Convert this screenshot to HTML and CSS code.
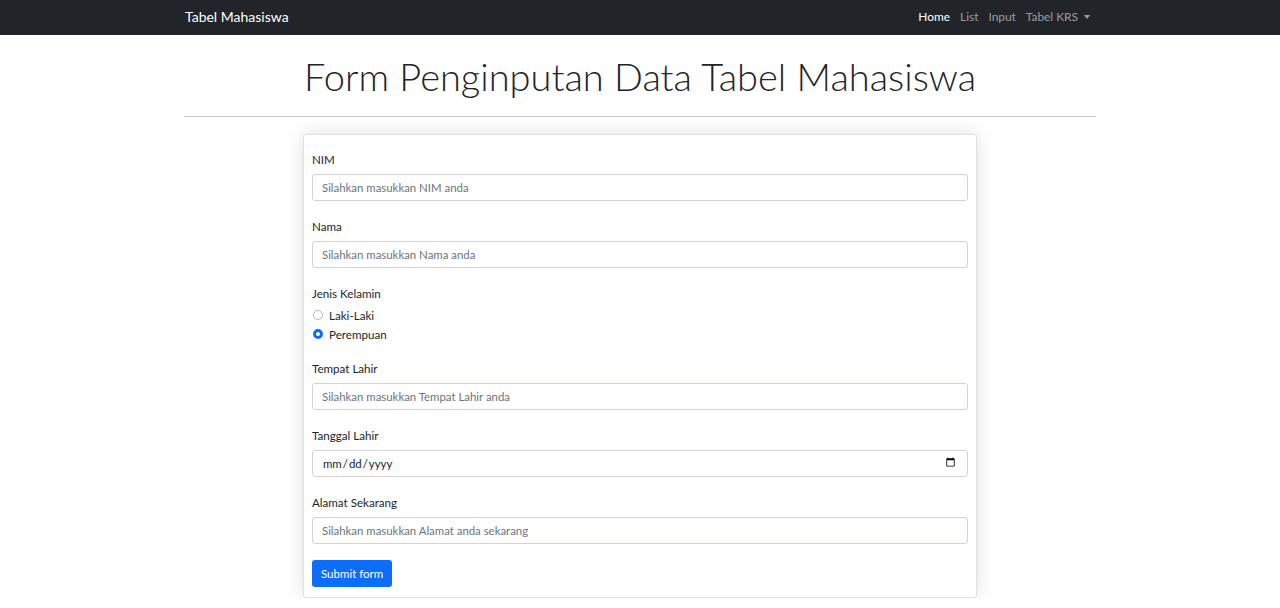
FILE: index.html
```html
<!DOCTYPE html>
<html>
  <head>
    <title>Tabel Mahasiswa</title>
    <link rel="stylesheet" href="styles.css">
  </head>
  <body>
    <nav class="navbar">
      <div class="navContainer">
        <a class="brand" href="#">Tabel Mahasiswa</a>
        <ul class="navLinks">
          <li><a class="active" href="#">Home</a></li>
          <li><a href="#">List</a></li>
          <li><a href="#">Input</a></li>
          <li><a class="dropdown" href="#">Tabel KRS</a></li>
        </ul>
      </div>
    </nav>
    <div class="container">
      <h1>Form Penginputan Data Tabel Mahasiswa</h1>
      <hr/>
      <form class="card" onsubmit="return false;">
        <div class="group">
          <label for="nim">NIM</label>
          <input type="text" id="nim" placeholder="Silahkan masukkan NIM anda">
        </div>
        <div class="group">
          <label for="nama">Nama</label>
          <input type="text" id="nama" placeholder="Silahkan masukkan Nama anda">
        </div>
        <div class="group">
          <label>Jenis Kelamin</label>
          <div class="radio">
            <input type="radio" name="jk" id="jk1" value="L">
            <span>Laki-Laki</span>
          </div>
          <div class="radio">
            <input type="radio" name="jk" id="jk2" value="P" checked>
            <span>Perempuan</span>
          </div>
        </div>
        <div class="group">
          <label for="tempat">Tempat Lahir</label>
          <input type="text" id="tempat" placeholder="Silahkan masukkan Tempat Lahir anda">
        </div>
        <div class="group">
          <label for="tanggal">Tanggal Lahir</label>
          <input type="date" id="tanggal">
        </div>
        <div class="group">
          <label for="alamat">Alamat Sekarang</label>
          <input type="text" id="alamat" placeholder="Silahkan masukkan Alamat anda sekarang">
        </div>
        <button type="submit">Submit form</button>
      </form>
    </div>
  </body>
</html>
```

FILE: styles.css
```css
body {
  margin: 0;
  font-family: 'Lato', sans-serif;
  font-size: 11.6px;
  color: #212529;
  background: #fff;
}
a {
  text-decoration: none;
}
.navbar {
  background: #212529;
  height: 35px;
}
.navContainer {
  box-sizing: border-box;
  width: 912px;
  margin: 0 auto;
  height: 35px;
  padding-bottom: 3px;
  display: flex;
  align-items: center;
  justify-content: space-between;
}
.brand {
  color: #fff;
  font-size: 14px;
  padding-left: 1px;
}
.navLinks {
  list-style: none;
  display: flex;
  margin: 0;
  padding: 0 1px 0 0;
}
.navLinks a {
  color: rgba(255,255,255,0.55);
  font-size: 11.9px;
  padding: 0 5px;
}
.navLinks a.active {
  color: #fff;
}
.dropdown::after {
  content: "";
  display: inline-block;
  margin-left: 6px;
  vertical-align: 2px;
  border-top: 4px solid;
  border-left: 3.5px solid transparent;
  border-right: 3.5px solid transparent;
}
.container {
  width: 912px;
  margin: 0 auto;
}
h1 {
  font-weight: 300;
  font-size: 38px;
  text-align: center;
  margin: 19px 0 0;
  line-height: 1.2;
}
hr {
  border: none;
  border-top: 1px solid #c8c8c8;
  margin: 16px 0 17px;
}
.card {
  width: 656px;
  margin: 0 auto;
  padding: 15px 8px 10px;
  border: 1px solid #e0e0e0;
  border-radius: 3px;
  box-shadow: 0 0 18px rgba(0,0,0,0.13);
}
.group {
  margin-bottom: 16px;
}
.group label {
  display: block;
  margin-bottom: 4px;
  line-height: 20px;
}
.group input[type=text],
.group input[type=date] {
  box-sizing: border-box;
  width: 100%;
  height: 27px;
  border: 1px solid #ced4da;
  border-radius: 3px;
  padding: 0 9px;
  font-family: inherit;
  font-size: 11.4px;
  color: #212529;
}
.group input::placeholder {
  color: #6c757d;
}
.radio {
  display: flex;
  align-items: center;
  height: 19px;
}
.radio:first-of-type {
  margin-top: -2px;
}
.radio:last-of-type {
  margin-bottom: -1px;
}
.radio input {
  appearance: none;
  box-sizing: border-box;
  margin: 0 6px 0 1px;
  width: 10px;
  height: 10px;
  border: 1px solid #b5b9be;
  border-radius: 50%;
  background: #fff;
}
.radio input:checked {
  border: 3px solid #0d6efd;
  background: #fff;
}
button {
  background: #0d6efd;
  color: #fff;
  border: none;
  border-radius: 3px;
  height: 27px;
  padding: 0 9px;
  font-family: inherit;
  font-size: 11.5px;
  cursor: pointer;
}
```
